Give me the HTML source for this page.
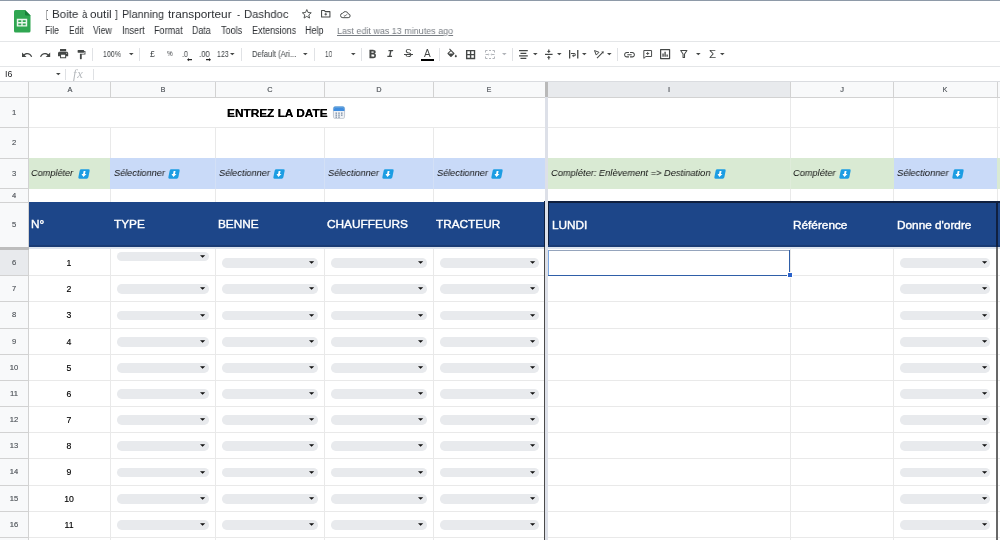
<!DOCTYPE html>
<html><head><meta charset="utf-8"><title>Planning transporteur</title>
<style>
html,body{margin:0;padding:0;}
body{width:1000px;height:540px;overflow:hidden;background:#fff;position:relative;font-family:"Liberation Sans",sans-serif;}
.t{position:absolute;white-space:pre;line-height:20px;height:20px;will-change:transform;}
svg{position:absolute;overflow:visible;}
</style></head><body>
<div style="position:absolute;left:0px;top:0px;width:1000px;height:1px;background:#8e9aa8;"></div>
<svg style="left:14px;top:9.5px" width="16.5" height="22.5" viewBox="0 0 16.5 22.5">
<path d="M1.6 0H11L16.5 5.5V20.9Q16.5 22.5 14.9 22.5H1.6Q0 22.5 0 20.9V1.6Q0 0 1.6 0Z" fill="#2fa651"/>
<path d="M11 0L16.5 5.5H12.2Q11 5.5 11 4.3Z" fill="#178038"/>
<path d="M2.8 8.8H13.2V16.6H2.8Z M4.3 10.2V12H7.3V10.2Z M8.7 10.2V12H11.7V10.2Z M4.3 13.4V15.2H7.3V13.4Z M8.7 13.4V15.2H11.7V13.4Z" fill="#e9f6ec" fill-rule="evenodd"/>
</svg>
<svg style="left:300.8px;top:8.4px" width="11.6" height="11.6" viewBox="0 0 24 24"><path d="M12 3.2l2.6 6.1 6.6.6-5 4.4 1.5 6.5L12 17.4l-5.7 3.4 1.5-6.5-5-4.4 6.6-.6z" fill="none" stroke="#444746" stroke-width="1.9" stroke-linejoin="round"/></svg>
<svg style="left:320.5px;top:10.2px" width="9.5" height="7.6" viewBox="0 0 20 16"><path d="M1.2 1.2h6l2 2.2h9.6v11.4H1.2z" fill="none" stroke="#444746" stroke-width="2.2" stroke-linejoin="round"/><path d="M10 6.2v5.4M7.3 8.9h5.4" stroke="#444746" stroke-width="1.8"/></svg>
<svg style="left:339.5px;top:10.6px" width="10.6" height="7.2" viewBox="0 0 24 16"><path d="M19 6.6A7 7 0 0 0 6 5 5 5 0 0 0 6.5 15H18.5a4.2 4.2 0 0 0 .5-8.4z" fill="none" stroke="#444746" stroke-width="2.2" stroke-linejoin="round"/><path d="M8.5 9.5l2.6 2.4 4.6-4.6" fill="none" stroke="#444746" stroke-width="1.9"/></svg>
<div style="position:absolute;left:0px;top:41px;width:1000px;height:1px;background:#e4e6e8;"></div>
<div style="position:absolute;left:0px;top:66px;width:1000px;height:1px;background:#e4e6e8;"></div>
<div style="position:absolute;left:0px;top:81px;width:1000px;height:1px;background:#dadce0;"></div>
<div style="position:absolute;left:91.9px;top:47.5px;width:1.1px;height:13px;background:#e0e2e5;"></div>
<div style="position:absolute;left:139.4px;top:47.5px;width:1.1px;height:13px;background:#e0e2e5;"></div>
<div style="position:absolute;left:240.8px;top:47.5px;width:1.1px;height:13px;background:#e0e2e5;"></div>
<div style="position:absolute;left:313.5px;top:47.5px;width:1.1px;height:13px;background:#e0e2e5;"></div>
<div style="position:absolute;left:360.6px;top:47.5px;width:1.1px;height:13px;background:#e0e2e5;"></div>
<div style="position:absolute;left:439.1px;top:47.5px;width:1.1px;height:13px;background:#e0e2e5;"></div>
<div style="position:absolute;left:512px;top:47.5px;width:1.1px;height:13px;background:#e0e2e5;"></div>
<div style="position:absolute;left:616.9px;top:47.5px;width:1.1px;height:13px;background:#e0e2e5;"></div>
<svg style="left:22.0px;top:51.5px" width="10" height="5.4" viewBox="0 0 20 9"><path d="M10.5 1.2c-2.7 0-5 1-6.9 2.600L0 .2v9h9L5.400 5.600c1.400-1.200 3.200-1.900 5.100-1.900 3.500 0 6.500 2.300 7.600 5.500l2.300-.8C19 4.200 15.100 1.200 10.500 1.200z" fill="#444746"/></svg>
<svg style="left:40.4px;top:51.5px" width="10" height="5.4" viewBox="0 0 20 9"><g transform="translate(20.4,0) scale(-1,1)"><path d="M10.5 1.2c-2.7 0-5 1-6.9 2.600L0 .2v9h9L5.400 5.600c1.400-1.200 3.200-1.900 5.100-1.900 3.500 0 6.500 2.300 7.600 5.500l2.300-.8C19 4.200 15.100 1.200 10.500 1.200z" fill="#444746"/></g></svg>
<svg style="left:57.9px;top:49.4px" width="10.2" height="9.4" viewBox="0 0 20 18"><path d="M17 5H3C1.340 5 0 6.340 0 8v6h4v4h12v-4h4V8c0-1.660-1.340-3-3-3zm-3 11H6v-5h8v5zm3-7c-.55 0-1-.45-1-1s.45-1 1-1 1 .45 1 1-.45 1-1 1zM16 0H4v4h12V0z" fill="#444746"/></svg>
<svg style="left:77.0px;top:49.699999999999996px" width="8.6" height="9.2" viewBox="0 0 18 20"><path d="M15 1c0-.55-.45-1-1-1H2c-.55 0-1 .45-1 1v4c0 .55.45 1 1 1h12c.55 0 1-.45 1-1V4h1v4H6v11c0 .55.45 1 1 1h2c.55 0 1-.45 1-1v-9h8V2h-3V1z" fill="#444746"/></svg>
<svg style="left:129.39999999999998px;top:53.099999999999994px" width="4.6" height="2.4" viewBox="0 0 10 5"><path d="M0 0h10L5 5z" fill="#444746"/></svg>
<svg style="left:187.1px;top:57.8px" width="5" height="3.4" viewBox="0 0 9 6"><path d="M9 1.900H3.400V0L0 3 3.400 6V4.100H9z" fill="#222"/></svg>
<svg style="left:205.9px;top:57.8px" width="5" height="3.4" viewBox="0 0 9 6"><path d="M0 1.900h5.600V0L9 3 5.600 6V4.100H0z" fill="#222"/></svg>
<svg style="left:229.89999999999998px;top:53.099999999999994px" width="4.6" height="2.4" viewBox="0 0 10 5"><path d="M0 0h10L5 5z" fill="#444746"/></svg>
<svg style="left:303.2px;top:53.099999999999994px" width="4.6" height="2.4" viewBox="0 0 10 5"><path d="M0 0h10L5 5z" fill="#444746"/></svg>
<svg style="left:350.7px;top:53.099999999999994px" width="4.6" height="2.4" viewBox="0 0 10 5"><path d="M0 0h10L5 5z" fill="#444746"/></svg>
<div style="position:absolute;left:403.9px;top:53.6px;width:9.4px;height:1px;background:#444746;"></div>
<div style="position:absolute;left:420.8px;top:58.8px;width:13.2px;height:2.3px;background:#000;"></div>
<svg style="left:447.0px;top:48.0px" width="10.6" height="10.6" viewBox="0 0 18 18"><path d="M12.400 8.500L4.800 .9 3.600 2.100l2 2L1.100 8.500c-.5.5-.5 1.300 0 1.800l4.700 4.700c.5.5 1.300.5 1.800 0l4.800-4.700c.5-.5.5-1.300 0-1.800zM2.800 9.400L6.700 5.500l3.900 3.900H2.800z" fill="#444746"/><path d="M15 11s-1.700 1.900-1.700 3c0 .9.800 1.700 1.700 1.700s1.700-.8 1.700-1.700c0-1.100-1.700-3-1.700-3z" fill="#444746"/></svg>
<svg style="left:466.4px;top:49.8px" width="9.2" height="9.2" viewBox="0 0 18 18"><path d="M1.300 1.300h15.400v15.400H1.300zM9 1.300v15.400M1.300 9h15.400" fill="none" stroke="#444746" stroke-width="2.700"/></svg>
<svg style="left:485.0px;top:49.9px" width="10" height="9" viewBox="0 0 20 18"><path d="M1 1h4M8 1h4M15 1h4M1 17h4M8 17h4M15 17h4M1 1v4M19 1v4M1 13v4M19 13v4" stroke="#b0b3b8" stroke-width="2" fill="none"/><path d="M1 9h5M14 9h5" stroke="#b0b3b8" stroke-width="2"/><path d="M6.500 6.500L9 9l-2.500 2.500zM13.500 6.500L11 9l2.500 2.500z" fill="#b0b3b8"/></svg>
<svg style="left:501.7px;top:53.099999999999994px" width="4.6" height="2.4" viewBox="0 0 10 5"><path d="M0 0h10L5 5z" fill="#b0b3b8"/></svg>
<svg style="left:519.4px;top:49.699999999999996px" width="8.8" height="9.2" viewBox="0 0 18 18.400"><path d="M0 0h18v2.600H0zM3 5.200h12v2.600H3zM0 10.500h18v2.600H0zM3 15.700h12v2.600H3z" fill="#444746"/></svg>
<svg style="left:532.5px;top:53.099999999999994px" width="4.6" height="2.4" viewBox="0 0 10 5"><path d="M0 0h10L5 5z" fill="#444746"/></svg>
<svg style="left:544.8000000000001px;top:49.0px" width="7.6" height="10.8" viewBox="0 0 16 21"><path d="M0 9.200h16v2.600H0z" fill="#444746"/><path d="M8 7.600L4 3.600h2.700V0h2.600v3.600H12zM8 13.400l4 4H9.300V21H6.700v-3.600H4z" fill="#444746"/></svg>
<svg style="left:557.0px;top:53.099999999999994px" width="4.6" height="2.4" viewBox="0 0 10 5"><path d="M0 0h10L5 5z" fill="#444746"/></svg>
<svg style="left:568.5999999999999px;top:50.0px" width="9.4" height="8.6" viewBox="0 0 19 17"><path d="M0 0h2.600v17H0zM16.400 0H19v17h-2.600z" fill="#444746"/><path d="M4 6h6.500a3.200 3.200 0 0 1 0 6.400H9.500v2L6 11.400l3.500-3v2h1a1.200 1.200 0 0 0 0-2.400H4z" fill="#444746"/></svg>
<svg style="left:582.0px;top:53.099999999999994px" width="4.6" height="2.4" viewBox="0 0 10 5"><path d="M0 0h10L5 5z" fill="#444746"/></svg>
<svg style="left:593.7px;top:50.0px" width="10" height="8.6" viewBox="0 0 20 17"><path d="M1 1l9 3.500L4.500 10z" fill="none" stroke="#444746" stroke-width="2" stroke-linejoin="round"/><path d="M6 16L18 4" stroke="#444746" stroke-width="2.2"/><path d="M19.500 2.500l-5 .8 4.200 4.200z" fill="#444746"/></svg>
<svg style="left:607.2px;top:53.099999999999994px" width="4.6" height="2.4" viewBox="0 0 10 5"><path d="M0 0h10L5 5z" fill="#444746"/></svg>
<svg style="left:624.0px;top:51.599999999999994px" width="11" height="5.4" viewBox="0 0 20 10"><path d="M1.900 5c0-1.710 1.390-3.100 3.100-3.100h4V0H5C2.240 0 0 2.240 0 5s2.240 5 5 5h4V8.100H5C3.290 8.100 1.900 6.710 1.900 5zM6 6h8V4H6v2zm9-6h-4v1.900h4c1.710 0 3.100 1.390 3.100 3.100s-1.390 3.100-3.100 3.100h-4V10h4c2.760 0 5-2.240 5-5s-2.240-5-5-5z" fill="#444746"/></svg>
<svg style="left:642.9px;top:49.7px" width="9.4" height="8.8" viewBox="0 0 20 20"><path d="M1.200 1.200h17.600v13.600H6L1.200 19z" fill="none" stroke="#444746" stroke-width="2.200" stroke-linejoin="round"/><path d="M10 4.500v7M6.500 8h7" stroke="#444746" stroke-width="2"/></svg>
<svg style="left:660.1px;top:49.199999999999996px" width="10.2" height="10.2" viewBox="0 0 20 20"><path d="M1.200 1.200h17.600v17.600H1.200z" fill="none" stroke="#444746" stroke-width="2.400" stroke-linejoin="round"/><path d="M6 9v6M10 5.500v9.500M14 11v4" stroke="#444746" stroke-width="2.600"/></svg>
<svg style="left:679.8000000000001px;top:50.099999999999994px" width="7.6" height="8.4" viewBox="0 0 16 18"><path d="M1.200 1.200h13.600L9.600 8.500v7.800H6.400V8.500z" fill="none" stroke="#444746" stroke-width="2.200" stroke-linejoin="round"/></svg>
<svg style="left:695.9000000000001px;top:53.099999999999994px" width="4.6" height="2.4" viewBox="0 0 10 5"><path d="M0 0h10L5 5z" fill="#444746"/></svg>
<svg style="left:720.4000000000001px;top:53.099999999999994px" width="4.6" height="2.4" viewBox="0 0 10 5"><path d="M0 0h10L5 5z" fill="#444746"/></svg>
<svg style="left:56.0px;top:73.3px" width="4.6" height="2.4" viewBox="0 0 10 5"><path d="M0 0h10L5 5z" fill="#444746"/></svg>
<div style="position:absolute;left:64.8px;top:69px;width:1px;height:11px;background:#dfe1e4;"></div>
<div style="position:absolute;left:92.8px;top:69px;width:1px;height:11px;background:#dfe1e4;"></div>
<div style="position:absolute;left:0px;top:82px;width:1000px;height:15px;background:#f8f9fa;"></div>
<div style="position:absolute;left:0px;top:97px;width:28px;height:443px;background:#f8f9fa;"></div>
<div style="position:absolute;left:548px;top:82px;width:242px;height:15px;background:#e8eaed;"></div>
<div style="position:absolute;left:0px;top:249.8px;width:28px;height:25.2px;background:#e8eaed;"></div>
<div style="position:absolute;left:110px;top:97px;width:1px;height:443px;background:#e9e9e9;"></div>
<div style="position:absolute;left:110px;top:82px;width:1px;height:15px;background:#d2d2d2;"></div>
<div style="position:absolute;left:215px;top:97px;width:1px;height:443px;background:#e9e9e9;"></div>
<div style="position:absolute;left:215px;top:82px;width:1px;height:15px;background:#d2d2d2;"></div>
<div style="position:absolute;left:324px;top:97px;width:1px;height:443px;background:#e9e9e9;"></div>
<div style="position:absolute;left:324px;top:82px;width:1px;height:15px;background:#d2d2d2;"></div>
<div style="position:absolute;left:433px;top:97px;width:1px;height:443px;background:#e9e9e9;"></div>
<div style="position:absolute;left:433px;top:82px;width:1px;height:15px;background:#d2d2d2;"></div>
<div style="position:absolute;left:545px;top:97px;width:1px;height:443px;background:#e9e9e9;"></div>
<div style="position:absolute;left:545px;top:82px;width:1px;height:15px;background:#d2d2d2;"></div>
<div style="position:absolute;left:790px;top:97px;width:1px;height:443px;background:#e9e9e9;"></div>
<div style="position:absolute;left:790px;top:82px;width:1px;height:15px;background:#d2d2d2;"></div>
<div style="position:absolute;left:893.3px;top:97px;width:1px;height:443px;background:#e9e9e9;"></div>
<div style="position:absolute;left:893.3px;top:82px;width:1px;height:15px;background:#d2d2d2;"></div>
<div style="position:absolute;left:996.5px;top:97px;width:1px;height:443px;background:#e9e9e9;"></div>
<div style="position:absolute;left:996.5px;top:82px;width:1px;height:15px;background:#d2d2d2;"></div>
<div style="position:absolute;left:1100px;top:97px;width:1px;height:443px;background:#e9e9e9;"></div>
<div style="position:absolute;left:1100px;top:82px;width:1px;height:15px;background:#d2d2d2;"></div>
<div style="position:absolute;left:29px;top:127px;width:971px;height:1px;background:#e9e9e9;"></div>
<div style="position:absolute;left:0px;top:127px;width:28px;height:1px;background:#d2d2d2;"></div>
<div style="position:absolute;left:29px;top:158px;width:971px;height:1px;background:#e9e9e9;"></div>
<div style="position:absolute;left:0px;top:158px;width:28px;height:1px;background:#d2d2d2;"></div>
<div style="position:absolute;left:29px;top:188px;width:971px;height:1px;background:#e9e9e9;"></div>
<div style="position:absolute;left:0px;top:188px;width:28px;height:1px;background:#d2d2d2;"></div>
<div style="position:absolute;left:29px;top:202px;width:971px;height:1px;background:#e9e9e9;"></div>
<div style="position:absolute;left:0px;top:202px;width:28px;height:1px;background:#d2d2d2;"></div>
<div style="position:absolute;left:29px;top:247px;width:971px;height:1px;background:#e9e9e9;"></div>
<div style="position:absolute;left:0px;top:247px;width:28px;height:1px;background:#d2d2d2;"></div>
<div style="position:absolute;left:29px;top:275px;width:971px;height:1px;background:#e9e9e9;"></div>
<div style="position:absolute;left:0px;top:275px;width:28px;height:1px;background:#d2d2d2;"></div>
<div style="position:absolute;left:29px;top:301px;width:971px;height:1px;background:#e9e9e9;"></div>
<div style="position:absolute;left:0px;top:301px;width:28px;height:1px;background:#d2d2d2;"></div>
<div style="position:absolute;left:29px;top:328px;width:971px;height:1px;background:#e9e9e9;"></div>
<div style="position:absolute;left:0px;top:328px;width:28px;height:1px;background:#d2d2d2;"></div>
<div style="position:absolute;left:29px;top:354px;width:971px;height:1px;background:#e9e9e9;"></div>
<div style="position:absolute;left:0px;top:354px;width:28px;height:1px;background:#d2d2d2;"></div>
<div style="position:absolute;left:29px;top:380px;width:971px;height:1px;background:#e9e9e9;"></div>
<div style="position:absolute;left:0px;top:380px;width:28px;height:1px;background:#d2d2d2;"></div>
<div style="position:absolute;left:29px;top:406px;width:971px;height:1px;background:#e9e9e9;"></div>
<div style="position:absolute;left:0px;top:406px;width:28px;height:1px;background:#d2d2d2;"></div>
<div style="position:absolute;left:29px;top:432px;width:971px;height:1px;background:#e9e9e9;"></div>
<div style="position:absolute;left:0px;top:432px;width:28px;height:1px;background:#d2d2d2;"></div>
<div style="position:absolute;left:29px;top:458px;width:971px;height:1px;background:#e9e9e9;"></div>
<div style="position:absolute;left:0px;top:458px;width:28px;height:1px;background:#d2d2d2;"></div>
<div style="position:absolute;left:29px;top:485px;width:971px;height:1px;background:#e9e9e9;"></div>
<div style="position:absolute;left:0px;top:485px;width:28px;height:1px;background:#d2d2d2;"></div>
<div style="position:absolute;left:29px;top:511px;width:971px;height:1px;background:#e9e9e9;"></div>
<div style="position:absolute;left:0px;top:511px;width:28px;height:1px;background:#d2d2d2;"></div>
<div style="position:absolute;left:29px;top:537px;width:971px;height:1px;background:#e9e9e9;"></div>
<div style="position:absolute;left:0px;top:537px;width:28px;height:1px;background:#d2d2d2;"></div>
<div style="position:absolute;left:29px;top:563px;width:971px;height:1px;background:#e9e9e9;"></div>
<div style="position:absolute;left:0px;top:563px;width:28px;height:1px;background:#d2d2d2;"></div>
<div style="position:absolute;left:29px;top:158px;width:81.3px;height:30.5px;background:#d9ead3;"></div>
<div style="position:absolute;left:110.3px;top:158px;width:435px;height:30.5px;background:#c9daf8;"></div>
<div style="position:absolute;left:548px;top:158px;width:345.5px;height:30.5px;background:#d9ead3;"></div>
<div style="position:absolute;left:893.5px;top:158px;width:103.8px;height:30.5px;background:#c9daf8;"></div>
<div style="position:absolute;left:997.3px;top:158px;width:3px;height:30.5px;background:#d9ead3;"></div>
<div style="position:absolute;left:215px;top:158px;width:1px;height:30.5px;background:#d3e0f6;"></div>
<div style="position:absolute;left:324px;top:158px;width:1px;height:30.5px;background:#d3e0f6;"></div>
<div style="position:absolute;left:433px;top:158px;width:1px;height:30.5px;background:#d3e0f6;"></div>
<div style="position:absolute;left:790px;top:158px;width:1px;height:30.5px;background:#dfecda;"></div>
<div style="position:absolute;left:29px;top:98px;width:516px;height:29px;background:#fff;"></div>
<div style="position:absolute;left:28px;top:82px;width:1px;height:458px;background:#d2d2d2;"></div>
<div style="position:absolute;left:0px;top:97px;width:1000px;height:1px;background:#d2d2d2;"></div>
<div style="position:absolute;left:29px;top:201.6px;width:515.5px;height:45.2px;background:#1d4689;"></div>
<div style="position:absolute;left:548px;top:201.6px;width:452px;height:45.2px;background:#1d4689;"></div>
<div style="position:absolute;left:545.4px;top:97px;width:2.7px;height:443px;background:#dde0e8;"></div>
<div style="position:absolute;left:545px;top:82px;width:2.8px;height:15px;background:#b9b9b9;"></div>
<div style="position:absolute;left:29px;top:246.8px;width:971px;height:1.8px;background:#dde4ee;"></div>
<div style="position:absolute;left:0px;top:247.2px;width:28.5px;height:2.6px;background:#bdbdbd;"></div>
<div style="position:absolute;left:544.1px;top:201.4px;width:1.4px;height:338.6px;background:#4a4a4a;"></div>
<div style="position:absolute;left:544.1px;top:201.4px;width:1.3px;height:45.4px;background:#10203f;"></div>
<div style="position:absolute;left:547.6px;top:201.4px;width:1.2px;height:45.4px;background:#10203f;"></div>
<div style="position:absolute;left:548px;top:201.4px;width:452px;height:1.6px;background:#10203f;"></div>
<div style="position:absolute;left:29px;top:245.3px;width:515.2px;height:1.5px;background:#193b75;"></div>
<div style="position:absolute;left:548px;top:245.3px;width:452px;height:1.5px;background:#193b75;"></div>
<div style="position:absolute;left:996px;top:201.4px;width:2px;height:338.6px;background:#686868;"></div>
<div style="position:absolute;left:996px;top:201.4px;width:2px;height:45.4px;background:#10203f;"></div>
<svg style="left:333.2px;top:106.4px" width="12" height="12" viewBox="0 0 24 24"><rect x="0.800" y="1" width="22.400" height="22" rx="3.500" fill="#f3f5f9" stroke="#c3c9d4" stroke-width="1.300"/><path d="M0.800 4.500q0-3.500 3.500-3.500h15.400q3.500 0 3.500 3.500v2.300H0.800z" fill="#3b94e4"/><path d="M1.200 6.300h21.600v1.100h-21.600z" fill="#2f7fcf"/><g fill="#b9c2da"><rect x="5.500" y="11.500" width="2.600" height="2.400"/><rect x="10.700" y="11.500" width="2.600" height="2.400"/><rect x="15.900" y="11.500" width="2.600" height="2.400" fill="#e0b9bf"/><rect x="5.500" y="15.300" width="2.600" height="2.400"/><rect x="10.700" y="15.300" width="2.600" height="2.400"/><rect x="15.900" y="15.300" width="2.600" height="2.400" fill="#e0b9bf"/><rect x="5.500" y="19" width="2.600" height="2.400"/><rect x="10.700" y="19" width="2.600" height="2.400"/><rect x="15.900" y="19" width="2.600" height="2.400" fill="#e0b9bf"/></g></svg>
<div style="position:absolute;left:29px;top:201.6px;width:515.5px;height:45.2px;background:#1d4689;"></div>
<div style="position:absolute;left:548px;top:201.6px;width:452px;height:45.2px;background:#1d4689;"></div>
<div style="position:absolute;left:545.4px;top:97px;width:2.7px;height:443px;background:#dde0e8;"></div>
<div style="position:absolute;left:545px;top:82px;width:2.8px;height:15px;background:#b9b9b9;"></div>
<div style="position:absolute;left:29px;top:246.8px;width:971px;height:1.8px;background:#dde4ee;"></div>
<div style="position:absolute;left:0px;top:247.2px;width:28.5px;height:2.6px;background:#bdbdbd;"></div>
<div style="position:absolute;left:544.1px;top:201.4px;width:1.4px;height:338.6px;background:#4a4a4a;"></div>
<div style="position:absolute;left:544.1px;top:201.4px;width:1.3px;height:45.4px;background:#10203f;"></div>
<div style="position:absolute;left:547.6px;top:201.4px;width:1.2px;height:45.4px;background:#10203f;"></div>
<div style="position:absolute;left:548px;top:201.4px;width:452px;height:1.6px;background:#10203f;"></div>
<div style="position:absolute;left:29px;top:245.3px;width:515.2px;height:1.5px;background:#193b75;"></div>
<div style="position:absolute;left:548px;top:245.3px;width:452px;height:1.5px;background:#193b75;"></div>
<div style="position:absolute;left:996px;top:201.4px;width:2px;height:338.6px;background:#686868;"></div>
<div style="position:absolute;left:996px;top:201.4px;width:2px;height:45.4px;background:#10203f;"></div>
<svg style="left:333px;top:106.5px" width="12" height="12" viewBox="0 0 24 24"><rect x="1" y="2" width="22" height="21" rx="3" fill="#eef1f5" stroke="#aeb7c2" stroke-width="1.2"/><path d="M1 5q0-3 3-3h16q3 0 3 3v3H1z" fill="#3f8de0"/><g fill="#7d8fa6"><rect x="5" y="11" width="3" height="2.600"/><rect x="10.500" y="11" width="3" height="2.600"/><rect x="16" y="11" width="3" height="2.600"/><rect x="5" y="15" width="3" height="2.600"/><rect x="10.500" y="15" width="3" height="2.600"/><rect x="16" y="15" width="3" height="2.600"/><rect x="5" y="19" width="3" height="2.600"/><rect x="10.500" y="19" width="3" height="2.600"/></g></svg>
<svg style="left:78.6px;top:168.5px;transform:skewX(-11deg)" width="10" height="10" viewBox="0 0 21 20"><rect x="0" y="0" width="21" height="20" rx="3" fill="#1c9de3"/><path d="M8.500 3.500h4v6.500h3.300L10.500 16.500 5.200 10h3.300z" fill="#fff"/></svg>
<svg style="left:169.3px;top:168.5px;transform:skewX(-11deg)" width="10" height="10" viewBox="0 0 21 20"><rect x="0" y="0" width="21" height="20" rx="3" fill="#1c9de3"/><path d="M8.500 3.500h4v6.500h3.300L10.500 16.500 5.200 10h3.300z" fill="#fff"/></svg>
<svg style="left:274.3px;top:168.5px;transform:skewX(-11deg)" width="10" height="10" viewBox="0 0 21 20"><rect x="0" y="0" width="21" height="20" rx="3" fill="#1c9de3"/><path d="M8.500 3.500h4v6.500h3.300L10.500 16.500 5.200 10h3.300z" fill="#fff"/></svg>
<svg style="left:383.3px;top:168.5px;transform:skewX(-11deg)" width="10" height="10" viewBox="0 0 21 20"><rect x="0" y="0" width="21" height="20" rx="3" fill="#1c9de3"/><path d="M8.500 3.500h4v6.500h3.300L10.500 16.500 5.200 10h3.300z" fill="#fff"/></svg>
<svg style="left:492.3px;top:168.5px;transform:skewX(-11deg)" width="10" height="10" viewBox="0 0 21 20"><rect x="0" y="0" width="21" height="20" rx="3" fill="#1c9de3"/><path d="M8.500 3.500h4v6.500h3.300L10.500 16.500 5.200 10h3.300z" fill="#fff"/></svg>
<svg style="left:715.3px;top:168.5px;transform:skewX(-11deg)" width="10" height="10" viewBox="0 0 21 20"><rect x="0" y="0" width="21" height="20" rx="3" fill="#1c9de3"/><path d="M8.500 3.500h4v6.500h3.300L10.500 16.500 5.200 10h3.300z" fill="#fff"/></svg>
<svg style="left:839.8px;top:168.5px;transform:skewX(-11deg)" width="10" height="10" viewBox="0 0 21 20"><rect x="0" y="0" width="21" height="20" rx="3" fill="#1c9de3"/><path d="M8.500 3.500h4v6.500h3.300L10.500 16.500 5.200 10h3.300z" fill="#fff"/></svg>
<svg style="left:952.9px;top:168.5px;transform:skewX(-11deg)" width="10" height="10" viewBox="0 0 21 20"><rect x="0" y="0" width="21" height="20" rx="3" fill="#1c9de3"/><path d="M8.500 3.500h4v6.500h3.300L10.500 16.500 5.200 10h3.300z" fill="#fff"/></svg>
<div style="position:absolute;left:116.5px;top:251.7px;width:92.5px;height:9.6px;background:#e8eaed;border-radius:4.8px;"></div>
<svg style="left:200.0px;top:254.7px" width="5.2" height="3" viewBox="0 0 10 5"><path d="M0 0h10L5 5z" fill="#111"/></svg>
<div style="position:absolute;left:221.5px;top:258.2px;width:96.5px;height:9.6px;background:#e8eaed;border-radius:4.8px;"></div>
<svg style="left:309.0px;top:261.2px" width="5.2" height="3" viewBox="0 0 10 5"><path d="M0 0h10L5 5z" fill="#111"/></svg>
<div style="position:absolute;left:330.5px;top:258.2px;width:96.5px;height:9.6px;background:#e8eaed;border-radius:4.8px;"></div>
<svg style="left:418.0px;top:261.2px" width="5.2" height="3" viewBox="0 0 10 5"><path d="M0 0h10L5 5z" fill="#111"/></svg>
<div style="position:absolute;left:439.5px;top:258.2px;width:99.5px;height:9.6px;background:#e8eaed;border-radius:4.8px;"></div>
<svg style="left:530.0px;top:261.2px" width="5.2" height="3" viewBox="0 0 10 5"><path d="M0 0h10L5 5z" fill="#111"/></svg>
<div style="position:absolute;left:899.8px;top:258.2px;width:90.70000000000005px;height:9.6px;background:#e8eaed;border-radius:4.8px;"></div>
<svg style="left:981.5px;top:261.2px" width="5.2" height="3" viewBox="0 0 10 5"><path d="M0 0h10L5 5z" fill="#111"/></svg>
<div style="position:absolute;left:116.5px;top:284.2px;width:92.5px;height:9.6px;background:#e8eaed;border-radius:4.8px;"></div>
<svg style="left:200.0px;top:287.2px" width="5.2" height="3" viewBox="0 0 10 5"><path d="M0 0h10L5 5z" fill="#111"/></svg>
<div style="position:absolute;left:221.5px;top:284.2px;width:96.5px;height:9.6px;background:#e8eaed;border-radius:4.8px;"></div>
<svg style="left:309.0px;top:287.2px" width="5.2" height="3" viewBox="0 0 10 5"><path d="M0 0h10L5 5z" fill="#111"/></svg>
<div style="position:absolute;left:330.5px;top:284.2px;width:96.5px;height:9.6px;background:#e8eaed;border-radius:4.8px;"></div>
<svg style="left:418.0px;top:287.2px" width="5.2" height="3" viewBox="0 0 10 5"><path d="M0 0h10L5 5z" fill="#111"/></svg>
<div style="position:absolute;left:439.5px;top:284.2px;width:99.5px;height:9.6px;background:#e8eaed;border-radius:4.8px;"></div>
<svg style="left:530.0px;top:287.2px" width="5.2" height="3" viewBox="0 0 10 5"><path d="M0 0h10L5 5z" fill="#111"/></svg>
<div style="position:absolute;left:899.8px;top:284.2px;width:90.70000000000005px;height:9.6px;background:#e8eaed;border-radius:4.8px;"></div>
<svg style="left:981.5px;top:287.2px" width="5.2" height="3" viewBox="0 0 10 5"><path d="M0 0h10L5 5z" fill="#111"/></svg>
<div style="position:absolute;left:116.5px;top:310.7px;width:92.5px;height:9.6px;background:#e8eaed;border-radius:4.8px;"></div>
<svg style="left:200.0px;top:313.7px" width="5.2" height="3" viewBox="0 0 10 5"><path d="M0 0h10L5 5z" fill="#111"/></svg>
<div style="position:absolute;left:221.5px;top:310.7px;width:96.5px;height:9.6px;background:#e8eaed;border-radius:4.8px;"></div>
<svg style="left:309.0px;top:313.7px" width="5.2" height="3" viewBox="0 0 10 5"><path d="M0 0h10L5 5z" fill="#111"/></svg>
<div style="position:absolute;left:330.5px;top:310.7px;width:96.5px;height:9.6px;background:#e8eaed;border-radius:4.8px;"></div>
<svg style="left:418.0px;top:313.7px" width="5.2" height="3" viewBox="0 0 10 5"><path d="M0 0h10L5 5z" fill="#111"/></svg>
<div style="position:absolute;left:439.5px;top:310.7px;width:99.5px;height:9.6px;background:#e8eaed;border-radius:4.8px;"></div>
<svg style="left:530.0px;top:313.7px" width="5.2" height="3" viewBox="0 0 10 5"><path d="M0 0h10L5 5z" fill="#111"/></svg>
<div style="position:absolute;left:899.8px;top:310.7px;width:90.70000000000005px;height:9.6px;background:#e8eaed;border-radius:4.8px;"></div>
<svg style="left:981.5px;top:313.7px" width="5.2" height="3" viewBox="0 0 10 5"><path d="M0 0h10L5 5z" fill="#111"/></svg>
<div style="position:absolute;left:116.5px;top:337.2px;width:92.5px;height:9.6px;background:#e8eaed;border-radius:4.8px;"></div>
<svg style="left:200.0px;top:340.2px" width="5.2" height="3" viewBox="0 0 10 5"><path d="M0 0h10L5 5z" fill="#111"/></svg>
<div style="position:absolute;left:221.5px;top:337.2px;width:96.5px;height:9.6px;background:#e8eaed;border-radius:4.8px;"></div>
<svg style="left:309.0px;top:340.2px" width="5.2" height="3" viewBox="0 0 10 5"><path d="M0 0h10L5 5z" fill="#111"/></svg>
<div style="position:absolute;left:330.5px;top:337.2px;width:96.5px;height:9.6px;background:#e8eaed;border-radius:4.8px;"></div>
<svg style="left:418.0px;top:340.2px" width="5.2" height="3" viewBox="0 0 10 5"><path d="M0 0h10L5 5z" fill="#111"/></svg>
<div style="position:absolute;left:439.5px;top:337.2px;width:99.5px;height:9.6px;background:#e8eaed;border-radius:4.8px;"></div>
<svg style="left:530.0px;top:340.2px" width="5.2" height="3" viewBox="0 0 10 5"><path d="M0 0h10L5 5z" fill="#111"/></svg>
<div style="position:absolute;left:899.8px;top:337.2px;width:90.70000000000005px;height:9.6px;background:#e8eaed;border-radius:4.8px;"></div>
<svg style="left:981.5px;top:340.2px" width="5.2" height="3" viewBox="0 0 10 5"><path d="M0 0h10L5 5z" fill="#111"/></svg>
<div style="position:absolute;left:116.5px;top:363.2px;width:92.5px;height:9.6px;background:#e8eaed;border-radius:4.8px;"></div>
<svg style="left:200.0px;top:366.2px" width="5.2" height="3" viewBox="0 0 10 5"><path d="M0 0h10L5 5z" fill="#111"/></svg>
<div style="position:absolute;left:221.5px;top:363.2px;width:96.5px;height:9.6px;background:#e8eaed;border-radius:4.8px;"></div>
<svg style="left:309.0px;top:366.2px" width="5.2" height="3" viewBox="0 0 10 5"><path d="M0 0h10L5 5z" fill="#111"/></svg>
<div style="position:absolute;left:330.5px;top:363.2px;width:96.5px;height:9.6px;background:#e8eaed;border-radius:4.8px;"></div>
<svg style="left:418.0px;top:366.2px" width="5.2" height="3" viewBox="0 0 10 5"><path d="M0 0h10L5 5z" fill="#111"/></svg>
<div style="position:absolute;left:439.5px;top:363.2px;width:99.5px;height:9.6px;background:#e8eaed;border-radius:4.8px;"></div>
<svg style="left:530.0px;top:366.2px" width="5.2" height="3" viewBox="0 0 10 5"><path d="M0 0h10L5 5z" fill="#111"/></svg>
<div style="position:absolute;left:899.8px;top:363.2px;width:90.70000000000005px;height:9.6px;background:#e8eaed;border-radius:4.8px;"></div>
<svg style="left:981.5px;top:366.2px" width="5.2" height="3" viewBox="0 0 10 5"><path d="M0 0h10L5 5z" fill="#111"/></svg>
<div style="position:absolute;left:116.5px;top:389.2px;width:92.5px;height:9.6px;background:#e8eaed;border-radius:4.8px;"></div>
<svg style="left:200.0px;top:392.2px" width="5.2" height="3" viewBox="0 0 10 5"><path d="M0 0h10L5 5z" fill="#111"/></svg>
<div style="position:absolute;left:221.5px;top:389.2px;width:96.5px;height:9.6px;background:#e8eaed;border-radius:4.8px;"></div>
<svg style="left:309.0px;top:392.2px" width="5.2" height="3" viewBox="0 0 10 5"><path d="M0 0h10L5 5z" fill="#111"/></svg>
<div style="position:absolute;left:330.5px;top:389.2px;width:96.5px;height:9.6px;background:#e8eaed;border-radius:4.8px;"></div>
<svg style="left:418.0px;top:392.2px" width="5.2" height="3" viewBox="0 0 10 5"><path d="M0 0h10L5 5z" fill="#111"/></svg>
<div style="position:absolute;left:439.5px;top:389.2px;width:99.5px;height:9.6px;background:#e8eaed;border-radius:4.8px;"></div>
<svg style="left:530.0px;top:392.2px" width="5.2" height="3" viewBox="0 0 10 5"><path d="M0 0h10L5 5z" fill="#111"/></svg>
<div style="position:absolute;left:899.8px;top:389.2px;width:90.70000000000005px;height:9.6px;background:#e8eaed;border-radius:4.8px;"></div>
<svg style="left:981.5px;top:392.2px" width="5.2" height="3" viewBox="0 0 10 5"><path d="M0 0h10L5 5z" fill="#111"/></svg>
<div style="position:absolute;left:116.5px;top:415.2px;width:92.5px;height:9.6px;background:#e8eaed;border-radius:4.8px;"></div>
<svg style="left:200.0px;top:418.2px" width="5.2" height="3" viewBox="0 0 10 5"><path d="M0 0h10L5 5z" fill="#111"/></svg>
<div style="position:absolute;left:221.5px;top:415.2px;width:96.5px;height:9.6px;background:#e8eaed;border-radius:4.8px;"></div>
<svg style="left:309.0px;top:418.2px" width="5.2" height="3" viewBox="0 0 10 5"><path d="M0 0h10L5 5z" fill="#111"/></svg>
<div style="position:absolute;left:330.5px;top:415.2px;width:96.5px;height:9.6px;background:#e8eaed;border-radius:4.8px;"></div>
<svg style="left:418.0px;top:418.2px" width="5.2" height="3" viewBox="0 0 10 5"><path d="M0 0h10L5 5z" fill="#111"/></svg>
<div style="position:absolute;left:439.5px;top:415.2px;width:99.5px;height:9.6px;background:#e8eaed;border-radius:4.8px;"></div>
<svg style="left:530.0px;top:418.2px" width="5.2" height="3" viewBox="0 0 10 5"><path d="M0 0h10L5 5z" fill="#111"/></svg>
<div style="position:absolute;left:899.8px;top:415.2px;width:90.70000000000005px;height:9.6px;background:#e8eaed;border-radius:4.8px;"></div>
<svg style="left:981.5px;top:418.2px" width="5.2" height="3" viewBox="0 0 10 5"><path d="M0 0h10L5 5z" fill="#111"/></svg>
<div style="position:absolute;left:116.5px;top:441.2px;width:92.5px;height:9.6px;background:#e8eaed;border-radius:4.8px;"></div>
<svg style="left:200.0px;top:444.2px" width="5.2" height="3" viewBox="0 0 10 5"><path d="M0 0h10L5 5z" fill="#111"/></svg>
<div style="position:absolute;left:221.5px;top:441.2px;width:96.5px;height:9.6px;background:#e8eaed;border-radius:4.8px;"></div>
<svg style="left:309.0px;top:444.2px" width="5.2" height="3" viewBox="0 0 10 5"><path d="M0 0h10L5 5z" fill="#111"/></svg>
<div style="position:absolute;left:330.5px;top:441.2px;width:96.5px;height:9.6px;background:#e8eaed;border-radius:4.8px;"></div>
<svg style="left:418.0px;top:444.2px" width="5.2" height="3" viewBox="0 0 10 5"><path d="M0 0h10L5 5z" fill="#111"/></svg>
<div style="position:absolute;left:439.5px;top:441.2px;width:99.5px;height:9.6px;background:#e8eaed;border-radius:4.8px;"></div>
<svg style="left:530.0px;top:444.2px" width="5.2" height="3" viewBox="0 0 10 5"><path d="M0 0h10L5 5z" fill="#111"/></svg>
<div style="position:absolute;left:899.8px;top:441.2px;width:90.70000000000005px;height:9.6px;background:#e8eaed;border-radius:4.8px;"></div>
<svg style="left:981.5px;top:444.2px" width="5.2" height="3" viewBox="0 0 10 5"><path d="M0 0h10L5 5z" fill="#111"/></svg>
<div style="position:absolute;left:116.5px;top:467.7px;width:92.5px;height:9.6px;background:#e8eaed;border-radius:4.8px;"></div>
<svg style="left:200.0px;top:470.7px" width="5.2" height="3" viewBox="0 0 10 5"><path d="M0 0h10L5 5z" fill="#111"/></svg>
<div style="position:absolute;left:221.5px;top:467.7px;width:96.5px;height:9.6px;background:#e8eaed;border-radius:4.8px;"></div>
<svg style="left:309.0px;top:470.7px" width="5.2" height="3" viewBox="0 0 10 5"><path d="M0 0h10L5 5z" fill="#111"/></svg>
<div style="position:absolute;left:330.5px;top:467.7px;width:96.5px;height:9.6px;background:#e8eaed;border-radius:4.8px;"></div>
<svg style="left:418.0px;top:470.7px" width="5.2" height="3" viewBox="0 0 10 5"><path d="M0 0h10L5 5z" fill="#111"/></svg>
<div style="position:absolute;left:439.5px;top:467.7px;width:99.5px;height:9.6px;background:#e8eaed;border-radius:4.8px;"></div>
<svg style="left:530.0px;top:470.7px" width="5.2" height="3" viewBox="0 0 10 5"><path d="M0 0h10L5 5z" fill="#111"/></svg>
<div style="position:absolute;left:899.8px;top:467.7px;width:90.70000000000005px;height:9.6px;background:#e8eaed;border-radius:4.8px;"></div>
<svg style="left:981.5px;top:470.7px" width="5.2" height="3" viewBox="0 0 10 5"><path d="M0 0h10L5 5z" fill="#111"/></svg>
<div style="position:absolute;left:116.5px;top:494.2px;width:92.5px;height:9.6px;background:#e8eaed;border-radius:4.8px;"></div>
<svg style="left:200.0px;top:497.2px" width="5.2" height="3" viewBox="0 0 10 5"><path d="M0 0h10L5 5z" fill="#111"/></svg>
<div style="position:absolute;left:221.5px;top:494.2px;width:96.5px;height:9.6px;background:#e8eaed;border-radius:4.8px;"></div>
<svg style="left:309.0px;top:497.2px" width="5.2" height="3" viewBox="0 0 10 5"><path d="M0 0h10L5 5z" fill="#111"/></svg>
<div style="position:absolute;left:330.5px;top:494.2px;width:96.5px;height:9.6px;background:#e8eaed;border-radius:4.8px;"></div>
<svg style="left:418.0px;top:497.2px" width="5.2" height="3" viewBox="0 0 10 5"><path d="M0 0h10L5 5z" fill="#111"/></svg>
<div style="position:absolute;left:439.5px;top:494.2px;width:99.5px;height:9.6px;background:#e8eaed;border-radius:4.8px;"></div>
<svg style="left:530.0px;top:497.2px" width="5.2" height="3" viewBox="0 0 10 5"><path d="M0 0h10L5 5z" fill="#111"/></svg>
<div style="position:absolute;left:899.8px;top:494.2px;width:90.70000000000005px;height:9.6px;background:#e8eaed;border-radius:4.8px;"></div>
<svg style="left:981.5px;top:497.2px" width="5.2" height="3" viewBox="0 0 10 5"><path d="M0 0h10L5 5z" fill="#111"/></svg>
<div style="position:absolute;left:116.5px;top:520.2px;width:92.5px;height:9.6px;background:#e8eaed;border-radius:4.8px;"></div>
<svg style="left:200.0px;top:523.2px" width="5.2" height="3" viewBox="0 0 10 5"><path d="M0 0h10L5 5z" fill="#111"/></svg>
<div style="position:absolute;left:221.5px;top:520.2px;width:96.5px;height:9.6px;background:#e8eaed;border-radius:4.8px;"></div>
<svg style="left:309.0px;top:523.2px" width="5.2" height="3" viewBox="0 0 10 5"><path d="M0 0h10L5 5z" fill="#111"/></svg>
<div style="position:absolute;left:330.5px;top:520.2px;width:96.5px;height:9.6px;background:#e8eaed;border-radius:4.8px;"></div>
<svg style="left:418.0px;top:523.2px" width="5.2" height="3" viewBox="0 0 10 5"><path d="M0 0h10L5 5z" fill="#111"/></svg>
<div style="position:absolute;left:439.5px;top:520.2px;width:99.5px;height:9.6px;background:#e8eaed;border-radius:4.8px;"></div>
<svg style="left:530.0px;top:523.2px" width="5.2" height="3" viewBox="0 0 10 5"><path d="M0 0h10L5 5z" fill="#111"/></svg>
<div style="position:absolute;left:899.8px;top:520.2px;width:90.70000000000005px;height:9.6px;background:#e8eaed;border-radius:4.8px;"></div>
<svg style="left:981.5px;top:523.2px" width="5.2" height="3" viewBox="0 0 10 5"><path d="M0 0h10L5 5z" fill="#111"/></svg>
<div style="position:absolute;left:548.2px;top:249.6px;width:241.8px;height:1px;background:#95a4bc;"></div>
<div style="position:absolute;left:548.2px;top:249.6px;width:1px;height:26px;background:#7aa7e2;"></div>
<div style="position:absolute;left:789.1px;top:249.6px;width:1.1px;height:26px;background:#2f5fa8;"></div>
<div style="position:absolute;left:548.2px;top:274.9px;width:241.8px;height:1.1px;background:#2f5fa8;"></div>
<div style="position:absolute;left:787.6px;top:273.4px;width:4px;height:4px;background:#2a62c9;outline:0.7px solid #fff;"></div>
<div class="t" style="left:46.1px;top:4.40px;font-size:11.8px;color:#2c2f33;transform:scaleX(0.5790);transform-origin:0 50%;">[</div>
<div class="t" style="left:52px;top:4.40px;font-size:11.8px;color:#2c2f33;transform:scaleX(0.9818);transform-origin:0 50%;">Boite</div>
<div class="t" style="left:81.9px;top:4.40px;font-size:11.8px;color:#2c2f33;transform:scaleX(0.8076);transform-origin:0 50%;">à</div>
<div class="t" style="left:89.9px;top:4.40px;font-size:11.8px;color:#2c2f33;transform:scaleX(0.9974);transform-origin:0 50%;">outil</div>
<div class="t" style="left:115.2px;top:4.40px;font-size:11.8px;color:#2c2f33;transform:scaleX(0.8229);transform-origin:0 50%;">]</div>
<div class="t" style="left:121.9px;top:4.40px;font-size:11.8px;color:#2c2f33;transform:scaleX(0.9168);transform-origin:0 50%;">Planning</div>
<div class="t" style="left:168px;top:4.40px;font-size:11.8px;color:#2c2f33;transform:scaleX(0.9936);transform-origin:0 50%;">transporteur</div>
<div class="t" style="left:237.1px;top:4.40px;font-size:11.8px;color:#2c2f33;transform:scaleX(0.8127);transform-origin:0 50%;">-</div>
<div class="t" style="left:244px;top:4.40px;font-size:11.8px;color:#2c2f33;transform:scaleX(0.9557);transform-origin:0 50%;">Dashdoc</div>
<div class="t" style="left:45px;top:21.10px;font-size:10px;color:#2c2f33;transform:scaleX(0.8682);transform-origin:0 50%;">File</div>
<div class="t" style="left:68.7px;top:21.10px;font-size:10px;color:#2c2f33;transform:scaleX(0.8413);transform-origin:0 50%;">Edit</div>
<div class="t" style="left:93.2px;top:21.10px;font-size:10px;color:#2c2f33;transform:scaleX(0.8744);transform-origin:0 50%;">View</div>
<div class="t" style="left:121.7px;top:21.10px;font-size:10px;color:#2c2f33;transform:scaleX(0.9034);transform-origin:0 50%;">Insert</div>
<div class="t" style="left:153.7px;top:21.10px;font-size:10px;color:#2c2f33;transform:scaleX(0.9062);transform-origin:0 50%;">Format</div>
<div class="t" style="left:192.3px;top:21.10px;font-size:10px;color:#2c2f33;transform:scaleX(0.8852);transform-origin:0 50%;">Data</div>
<div class="t" style="left:220.7px;top:21.10px;font-size:10px;color:#2c2f33;transform:scaleX(0.9118);transform-origin:0 50%;">Tools</div>
<div class="t" style="left:251.5px;top:21.10px;font-size:10px;color:#2c2f33;transform:scaleX(0.9035);transform-origin:0 50%;">Extensions</div>
<div class="t" style="left:305px;top:21.10px;font-size:10px;color:#2c2f33;transform:scaleX(0.8990);transform-origin:0 50%;">Help</div>
<div class="t" style="left:336.9px;top:21.00px;font-size:9.5px;color:#777c82;transform:scaleX(0.9435);transform-origin:0 50%;text-decoration:underline;text-decoration-thickness:0.6px;text-underline-offset:1.2px;">Last edit was 13 minutes ago</div>
<div class="t" style="left:103.2px;top:43.50px;font-size:8.8px;color:#3c4043;transform:scaleX(0.8000);transform-origin:0 50%;">100%</div>
<div class="t" style="left:149.6px;top:44.10px;font-size:8.8px;color:#3c4043;transform:scaleX(0.9376);transform-origin:0 50%;">£</div>
<div class="t" style="left:166.8px;top:44.10px;font-size:8px;color:#3c4043;transform:scaleX(0.8000);transform-origin:0 50%;">%</div>
<div class="t" style="left:182px;top:44.10px;font-size:8.8px;color:#3c4043;transform:scaleX(0.7898);transform-origin:0 50%;">.0</div>
<div class="t" style="left:199.2px;top:44.10px;font-size:8.8px;color:#3c4043;transform:scaleX(0.8828);transform-origin:0 50%;">.00</div>
<div class="t" style="left:216.9px;top:44.10px;font-size:8.8px;color:#3c4043;transform:scaleX(0.7966);transform-origin:0 50%;">123</div>
<div class="t" style="left:252.4px;top:43.80px;font-size:8.8px;color:#3c4043;transform:scaleX(0.8609);transform-origin:0 50%;">Default (Ari...</div>
<div class="t" style="left:324.8px;top:43.80px;font-size:8.8px;color:#3c4043;transform:scaleX(0.7349);transform-origin:0 50%;">10</div>
<div class="t" style="left:369.2px;top:44.60px;font-size:10.2px;color:#444746;font-weight:700;-webkit-text-stroke:0.3px #444746;">B</div>
<div class="t" style="left:387.2px;top:44.20px;font-size:10.4px;color:#444746;font-style:italic;font-family:'Liberation Mono',monospace;font-weight:700;">I</div>
<div class="t" style="left:405.2px;top:44.20px;font-size:10.2px;color:#444746;">S</div>
<div class="t" style="left:424.2px;top:43.70px;font-size:10px;color:#444746;">A</div>
<div class="t" style="left:708.6px;top:44.40px;font-size:11.5px;color:#444746;">Σ</div>
<div class="t" style="left:4.5px;top:64.20px;font-size:8.8px;color:#202124;">I6</div>
<div class="t" style="left:73.3px;top:63.80px;font-size:12.5px;color:#b4b8bc;font-style:italic;font-family:'Liberation Serif',serif;letter-spacing:0.8px;">fx</div>
<div class="t" style="left:-30.5px;width:200px;text-align:center;top:79.60px;font-size:7.4px;color:#6a6e73;">A</div>
<div class="t" style="left:62.5px;width:200px;text-align:center;top:79.60px;font-size:7.4px;color:#6a6e73;">B</div>
<div class="t" style="left:169.5px;width:200px;text-align:center;top:79.60px;font-size:7.4px;color:#6a6e73;">C</div>
<div class="t" style="left:278.5px;width:200px;text-align:center;top:79.60px;font-size:7.4px;color:#6a6e73;">D</div>
<div class="t" style="left:389.0px;width:200px;text-align:center;top:79.60px;font-size:7.4px;color:#6a6e73;">E</div>
<div class="t" style="left:569.0px;width:200px;text-align:center;top:79.60px;font-size:7.4px;color:#6a6e73;">I</div>
<div class="t" style="left:741.65px;width:200px;text-align:center;top:79.60px;font-size:7.4px;color:#6a6e73;">J</div>
<div class="t" style="left:844.9px;width:200px;text-align:center;top:79.60px;font-size:7.4px;color:#6a6e73;">K</div>
<div class="t" style="left:-86.2px;width:200px;text-align:center;top:102.50px;font-size:7.6px;color:#6a6e73;">1</div>
<div class="t" style="left:-86.2px;width:200px;text-align:center;top:133.00px;font-size:7.6px;color:#6a6e73;">2</div>
<div class="t" style="left:-86.2px;width:200px;text-align:center;top:163.50px;font-size:7.6px;color:#6a6e73;">3</div>
<div class="t" style="left:-86.2px;width:200px;text-align:center;top:185.50px;font-size:7.6px;color:#6a6e73;">4</div>
<div class="t" style="left:-86.2px;width:200px;text-align:center;top:215.00px;font-size:7.6px;color:#6a6e73;">5</div>
<div class="t" style="left:-86.2px;width:200px;text-align:center;top:252.50px;font-size:7.6px;color:#6a6e73;">6</div>
<div class="t" style="left:-86.2px;width:200px;text-align:center;top:278.50px;font-size:7.6px;color:#6a6e73;">7</div>
<div class="t" style="left:-86.2px;width:200px;text-align:center;top:305.00px;font-size:7.6px;color:#6a6e73;">8</div>
<div class="t" style="left:-86.2px;width:200px;text-align:center;top:331.50px;font-size:7.6px;color:#6a6e73;">9</div>
<div class="t" style="left:-86.2px;width:200px;text-align:center;top:357.50px;font-size:7.6px;color:#6a6e73;">10</div>
<div class="t" style="left:-86.2px;width:200px;text-align:center;top:383.50px;font-size:7.6px;color:#6a6e73;">11</div>
<div class="t" style="left:-86.2px;width:200px;text-align:center;top:409.50px;font-size:7.6px;color:#6a6e73;">12</div>
<div class="t" style="left:-86.2px;width:200px;text-align:center;top:435.50px;font-size:7.6px;color:#6a6e73;">13</div>
<div class="t" style="left:-86.2px;width:200px;text-align:center;top:462.00px;font-size:7.6px;color:#6a6e73;">14</div>
<div class="t" style="left:-86.2px;width:200px;text-align:center;top:488.50px;font-size:7.6px;color:#6a6e73;">15</div>
<div class="t" style="left:-86.2px;width:200px;text-align:center;top:514.50px;font-size:7.6px;color:#6a6e73;">16</div>
<div class="t" style="left:226.9px;top:102.50px;font-size:11.8px;color:#000;font-weight:700;transform:scaleX(1.0032);transform-origin:0 50%;">ENTREZ LA DATE</div>
<div class="t" style="left:-30.5px;width:200px;text-align:center;top:79.60px;font-size:7.4px;color:#6a6e73;">A</div>
<div class="t" style="left:62.5px;width:200px;text-align:center;top:79.60px;font-size:7.4px;color:#6a6e73;">B</div>
<div class="t" style="left:169.5px;width:200px;text-align:center;top:79.60px;font-size:7.4px;color:#6a6e73;">C</div>
<div class="t" style="left:278.5px;width:200px;text-align:center;top:79.60px;font-size:7.4px;color:#6a6e73;">D</div>
<div class="t" style="left:389.0px;width:200px;text-align:center;top:79.60px;font-size:7.4px;color:#6a6e73;">E</div>
<div class="t" style="left:569.0px;width:200px;text-align:center;top:79.60px;font-size:7.4px;color:#6a6e73;">I</div>
<div class="t" style="left:741.65px;width:200px;text-align:center;top:79.60px;font-size:7.4px;color:#6a6e73;">J</div>
<div class="t" style="left:844.9px;width:200px;text-align:center;top:79.60px;font-size:7.4px;color:#6a6e73;">K</div>
<div class="t" style="left:-86.2px;width:200px;text-align:center;top:102.50px;font-size:7.6px;color:#6a6e73;">1</div>
<div class="t" style="left:-86.2px;width:200px;text-align:center;top:133.00px;font-size:7.6px;color:#6a6e73;">2</div>
<div class="t" style="left:-86.2px;width:200px;text-align:center;top:163.50px;font-size:7.6px;color:#6a6e73;">3</div>
<div class="t" style="left:-86.2px;width:200px;text-align:center;top:185.50px;font-size:7.6px;color:#6a6e73;">4</div>
<div class="t" style="left:-86.2px;width:200px;text-align:center;top:215.00px;font-size:7.6px;color:#6a6e73;">5</div>
<div class="t" style="left:-86.2px;width:200px;text-align:center;top:252.50px;font-size:7.6px;color:#6a6e73;">6</div>
<div class="t" style="left:-86.2px;width:200px;text-align:center;top:278.50px;font-size:7.6px;color:#6a6e73;">7</div>
<div class="t" style="left:-86.2px;width:200px;text-align:center;top:305.00px;font-size:7.6px;color:#6a6e73;">8</div>
<div class="t" style="left:-86.2px;width:200px;text-align:center;top:331.50px;font-size:7.6px;color:#6a6e73;">9</div>
<div class="t" style="left:-86.2px;width:200px;text-align:center;top:357.50px;font-size:7.6px;color:#6a6e73;">10</div>
<div class="t" style="left:-86.2px;width:200px;text-align:center;top:383.50px;font-size:7.6px;color:#6a6e73;">11</div>
<div class="t" style="left:-86.2px;width:200px;text-align:center;top:409.50px;font-size:7.6px;color:#6a6e73;">12</div>
<div class="t" style="left:-86.2px;width:200px;text-align:center;top:435.50px;font-size:7.6px;color:#6a6e73;">13</div>
<div class="t" style="left:-86.2px;width:200px;text-align:center;top:462.00px;font-size:7.6px;color:#6a6e73;">14</div>
<div class="t" style="left:-86.2px;width:200px;text-align:center;top:488.50px;font-size:7.6px;color:#6a6e73;">15</div>
<div class="t" style="left:-86.2px;width:200px;text-align:center;top:514.50px;font-size:7.6px;color:#6a6e73;">16</div>
<div class="t" style="left:226.9px;top:102.50px;font-size:11.8px;color:#000;font-weight:700;transform:scaleX(1.0032);transform-origin:0 50%;">ENTREZ LA DATE</div>
<div class="t" style="left:31.4px;top:163.30px;font-size:9.6px;color:#111;font-style:italic;transform:scaleX(0.9533);transform-origin:0 50%;">Compléter</div>
<div class="t" style="left:113.6px;top:163.30px;font-size:9.6px;color:#111;font-style:italic;transform:scaleX(0.9523);transform-origin:0 50%;">Sélectionner</div>
<div class="t" style="left:218.6px;top:163.30px;font-size:9.6px;color:#111;font-style:italic;transform:scaleX(0.9523);transform-origin:0 50%;">Sélectionner</div>
<div class="t" style="left:327.6px;top:163.30px;font-size:9.6px;color:#111;font-style:italic;transform:scaleX(0.9523);transform-origin:0 50%;">Sélectionner</div>
<div class="t" style="left:436.6px;top:163.30px;font-size:9.6px;color:#111;font-style:italic;transform:scaleX(0.9523);transform-origin:0 50%;">Sélectionner</div>
<div class="t" style="left:551px;top:163.30px;font-size:9.6px;color:#111;font-style:italic;transform:scaleX(0.9679);transform-origin:0 50%;">Compléter: Enlèvement =&gt; Destination</div>
<div class="t" style="left:792.6px;top:163.30px;font-size:9.6px;color:#111;font-style:italic;transform:scaleX(0.9624);transform-origin:0 50%;">Compléter</div>
<div class="t" style="left:896.6px;top:163.30px;font-size:9.6px;color:#111;font-style:italic;transform:scaleX(0.9673);transform-origin:0 50%;">Sélectionner</div>
<div class="t" style="left:31px;top:213.60px;font-size:11.8px;color:#fff;-webkit-text-stroke:0.4px #fff;">N°</div>
<div class="t" style="left:113.5px;top:213.60px;font-size:11.8px;color:#fff;-webkit-text-stroke:0.4px #fff;">TYPE</div>
<div class="t" style="left:218px;top:213.60px;font-size:11.8px;color:#fff;-webkit-text-stroke:0.4px #fff;">BENNE</div>
<div class="t" style="left:327px;top:213.60px;font-size:11.8px;color:#fff;transform:scaleX(1.0047);transform-origin:0 50%;-webkit-text-stroke:0.4px #fff;">CHAUFFEURS</div>
<div class="t" style="left:436px;top:213.60px;font-size:11.8px;color:#fff;-webkit-text-stroke:0.4px #fff;">TRACTEUR</div>
<div class="t" style="left:551.5px;top:215.00px;font-size:11.8px;color:#fff;-webkit-text-stroke:0.4px #fff;">LUNDI</div>
<div class="t" style="left:792.5px;top:215.00px;font-size:11.8px;color:#fff;-webkit-text-stroke:0.4px #fff;">Référence</div>
<div class="t" style="left:896.5px;top:215.00px;font-size:11.8px;color:#fff;-webkit-text-stroke:0.4px #fff;">Donne d&#x27;ordre</div>
<div class="t" style="left:-30.700000000000003px;width:200px;text-align:center;top:252.80px;font-size:8.7px;color:#000;-webkit-text-stroke:0.15px #000;">1</div>
<div class="t" style="left:-30.700000000000003px;width:200px;text-align:center;top:278.80px;font-size:8.7px;color:#000;-webkit-text-stroke:0.15px #000;">2</div>
<div class="t" style="left:-30.700000000000003px;width:200px;text-align:center;top:305.30px;font-size:8.7px;color:#000;-webkit-text-stroke:0.15px #000;">3</div>
<div class="t" style="left:-30.700000000000003px;width:200px;text-align:center;top:331.80px;font-size:8.7px;color:#000;-webkit-text-stroke:0.15px #000;">4</div>
<div class="t" style="left:-30.700000000000003px;width:200px;text-align:center;top:357.80px;font-size:8.7px;color:#000;-webkit-text-stroke:0.15px #000;">5</div>
<div class="t" style="left:-30.700000000000003px;width:200px;text-align:center;top:383.80px;font-size:8.7px;color:#000;-webkit-text-stroke:0.15px #000;">6</div>
<div class="t" style="left:-30.700000000000003px;width:200px;text-align:center;top:409.80px;font-size:8.7px;color:#000;-webkit-text-stroke:0.15px #000;">7</div>
<div class="t" style="left:-30.700000000000003px;width:200px;text-align:center;top:435.80px;font-size:8.7px;color:#000;-webkit-text-stroke:0.15px #000;">8</div>
<div class="t" style="left:-30.700000000000003px;width:200px;text-align:center;top:462.30px;font-size:8.7px;color:#000;-webkit-text-stroke:0.15px #000;">9</div>
<div class="t" style="left:-30.700000000000003px;width:200px;text-align:center;top:488.80px;font-size:8.7px;color:#000;-webkit-text-stroke:0.15px #000;">10</div>
<div class="t" style="left:-30.700000000000003px;width:200px;text-align:center;top:514.80px;font-size:8.7px;color:#000;-webkit-text-stroke:0.15px #000;">11</div>
</body></html>
